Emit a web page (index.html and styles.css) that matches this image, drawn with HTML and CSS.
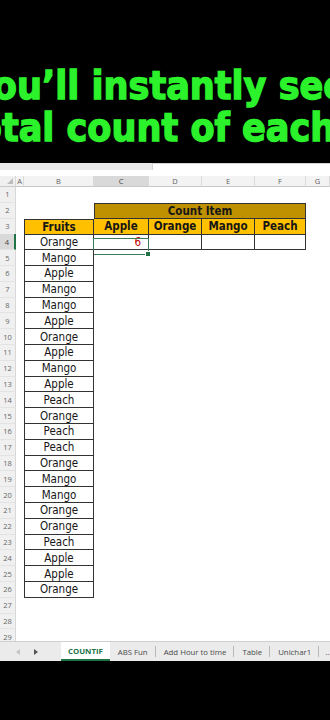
FILE: index.html
```html
<!DOCTYPE html>
<html lang="en">
<head>
    <meta charset="UTF-8">
    <meta name="viewport" content="width=device-width, initial-scale=1.0">
    <title>COUNTIF</title>
    <link rel="stylesheet" href="styles.css">
</head>
<body>
    <div class="caption">
        <div class="caption-line first">You’ll instantly see the</div>
        <div class="caption-line second">total count of each fruit</div>
    </div>

    <div class="excel">
        <div class="formula-strip">
            <div class="name-area"></div>
            <div class="formula-box"></div>
        </div>
        <div class="strip-gap"></div>

        <div class="sheet">
            <div class="row head">
                <div class="corner"><span class="corner-mark"></span></div>
                <div class="ch">A</div>
                <div class="ch">B</div>
                <div class="ch sel">C</div>
                <div class="ch">D</div>
                <div class="ch">E</div>
                <div class="ch">F</div>
                <div class="ch">G</div>
            </div>

            <div class="row"><div class="rh">1</div></div>
            <div class="row">
                <div class="rh">2</div>
                <div class="cell title">Count Item</div>
            </div>
            <div class="row">
                <div class="rh">3</div>
                <div class="cell b top head-cell">Fruits</div>
                <div class="cell c head-cell">Apple</div>
                <div class="cell d head-cell">Orange</div>
                <div class="cell e head-cell">Mango</div>
                <div class="cell f head-cell">Peach</div>
            </div>
            <div class="row">
                <div class="rh sel">4</div>
                <div class="cell b">Orange</div>
                <div class="cell c num">6<span class="selection"><span class="handle"></span></span></div>
                <div class="cell d"></div>
                <div class="cell e"></div>
                <div class="cell f"></div>
            </div>
            <div class="row"><div class="rh">5</div><div class="cell b">Mango</div></div>
            <div class="row"><div class="rh">6</div><div class="cell b">Apple</div></div>
            <div class="row"><div class="rh">7</div><div class="cell b">Mango</div></div>
            <div class="row"><div class="rh">8</div><div class="cell b">Mango</div></div>
            <div class="row"><div class="rh">9</div><div class="cell b">Apple</div></div>
            <div class="row"><div class="rh">10</div><div class="cell b">Orange</div></div>
            <div class="row"><div class="rh">11</div><div class="cell b">Apple</div></div>
            <div class="row"><div class="rh">12</div><div class="cell b">Mango</div></div>
            <div class="row"><div class="rh">13</div><div class="cell b">Apple</div></div>
            <div class="row"><div class="rh">14</div><div class="cell b">Peach</div></div>
            <div class="row"><div class="rh">15</div><div class="cell b">Orange</div></div>
            <div class="row"><div class="rh">16</div><div class="cell b">Peach</div></div>
            <div class="row"><div class="rh">17</div><div class="cell b">Peach</div></div>
            <div class="row"><div class="rh">18</div><div class="cell b">Orange</div></div>
            <div class="row"><div class="rh">19</div><div class="cell b">Mango</div></div>
            <div class="row"><div class="rh">20</div><div class="cell b">Mango</div></div>
            <div class="row"><div class="rh">21</div><div class="cell b">Orange</div></div>
            <div class="row"><div class="rh">22</div><div class="cell b">Orange</div></div>
            <div class="row"><div class="rh">23</div><div class="cell b">Peach</div></div>
            <div class="row"><div class="rh">24</div><div class="cell b">Apple</div></div>
            <div class="row"><div class="rh">25</div><div class="cell b">Apple</div></div>
            <div class="row"><div class="rh">26</div><div class="cell b">Orange</div></div>
            <div class="row"><div class="rh">27</div></div>
            <div class="row"><div class="rh">28</div></div>
            <div class="row"><div class="rh">29</div></div>
        </div>

        <div class="tabs">
            <div class="nav">
                <svg class="arrow off" width="5" height="6" viewBox="0 0 5 6"><path d="M4 0 L0 3 L4 6 Z"/></svg>
                <svg class="arrow" width="5" height="6" viewBox="0 0 5 6"><path d="M1 0 L5 3 L1 6 Z"/></svg>
            </div>
            <div class="tab active">COUNTIF</div>
            <div class="tab">ABS Fun</div>
            <div class="tab">Add Hour to time</div>
            <div class="tab">Table</div>
            <div class="tab">Unichar1</div>
            <div class="tab more">...</div>
        </div>
    </div>
</body>
</html>
```

FILE: styles.css
```css
body {
    background-color: black;
    margin: 0;
    padding: 0;
    font-family: "Liberation Sans Narrow", "DejaVu Sans Condensed", "Liberation Sans", sans-serif;
}

/* 上の字幕 */
.caption {
    height: 163px;
    box-sizing: border-box;
    padding-top: 65px;
    overflow: hidden;
    color: #2cf22c;
    font-family: "DejaVu Sans Condensed", "DejaVu Sans", sans-serif;
    font-stretch: condensed;
    font-weight: bold;
    font-size: 39px;
    line-height: 42px;
    white-space: nowrap;
    -webkit-text-stroke: 1.3px #2cf22c;
}

.caption-line.first {
    text-indent: -29px;
}

.caption-line.second {
    text-indent: -39px;
}

/* Excel の画面 */
.excel {
    background-color: white;
}

.formula-strip {
    display: flex;
    height: 7px;
    background-color: #e9e9e9;
}

.name-area {
    width: 152px;
}

.formula-box {
    flex: 1;
    background-color: white;
    border-left: 1px solid #d4d4d4;
    border-top: 1px solid #d4d4d4;
}

.strip-gap {
    height: 6px;
}

.sheet {
    height: 465px;
    overflow: hidden;
}

.row {
    display: grid;
    grid-template-columns: 16px 8px 70px 55px 53px 53px 51px 1fr;
    height: 15.8px;
    font-size: 11.5px;
    color: #161616;
}

.row.head {
    height: 11px;
    font-family: "Open Sans", "Liberation Sans", sans-serif;
    font-size: 7.5px;
    color: #606060;
}

.corner {
    position: relative;
    background-color: #f0f0f0;
    border-right: 1px solid #d8d8d8;
    border-bottom: 1px solid #c8c8c8;
}

.corner-mark {
    position: absolute;
    right: 2px;
    bottom: 2px;
    width: 0;
    height: 0;
    border-left: 6px solid transparent;
    border-bottom: 6px solid #bdbdbd;
}

.ch {
    display: flex;
    align-items: center;
    justify-content: center;
    background-color: #f3f3f3;
    border-right: 1px solid #dadada;
    border-bottom: 1px solid #c8c8c8;
}

.ch.sel {
    background-color: #d9d9d9;
    color: #444;
}

.rh {
    grid-column: 1;
    display: flex;
    align-items: center;
    justify-content: center;
    box-sizing: border-box;
    background-color: #f0f0f0;
    border-right: 1px solid #d8d8d8;
    border-bottom: 1px solid #e3e3e3;
    font-family: "Open Sans", "Liberation Sans", sans-serif;
    font-size: 7.5px;
    color: #666;
}

.rh.sel {
    background-color: #d9d9d9;
    border-right: 2px solid #217346;
    color: #444;
}

.cell {
    position: relative;
    display: flex;
    align-items: center;
    justify-content: center;
    box-sizing: border-box;
    border-right: 1px solid #333;
    border-bottom: 1px solid #333;
    white-space: nowrap;
}

.cell.b {
    grid-column: 3;
    border-left: 1px solid #333;
}

.cell.c { grid-column: 4; }
.cell.d { grid-column: 5; }
.cell.e { grid-column: 6; }
.cell.f { grid-column: 7; }

.cell.top {
    border-top: 1px solid #333;
}

.cell.title {
    grid-column: 4 / 8;
    background-color: #bf9000;
    border-top: 1px solid #333;
    border-left: 1px solid #333;
    font-weight: bold;
}

.head-cell {
    background-color: #ffc000;
    font-weight: bold;
}

.cell.num {
    justify-content: flex-end;
    padding-right: 7px;
    color: #c00000;
}

/* 選択中のセル */
.selection {
    position: absolute;
    top: 4px;
    left: -1px;
    right: -1px;
    height: 17px;
    box-sizing: border-box;
    border: 1.5px solid #3d7a57;
}

.handle {
    position: absolute;
    right: -3px;
    bottom: -3px;
    width: 4px;
    height: 4px;
    background-color: #217346;
    border: 1px solid white;
}

/* シートタブ */
.tabs {
    display: flex;
    align-items: stretch;
    height: 20px;
    box-sizing: border-box;
    background-color: #ebebeb;
    border-top: 1px solid #d0d0d0;
    font-family: "Open Sans", "Liberation Sans", sans-serif;
    font-size: 7.8px;
    color: #4a4a4a;
    white-space: nowrap;
    overflow: hidden;
}

.nav {
    flex-shrink: 0;
    width: 61px;
    display: flex;
    align-items: center;
    gap: 12px;
    padding-left: 16px;
    box-sizing: border-box;
}

.arrow {
    fill: #555;
}

.arrow.off {
    fill: #c4c4c4;
}

.tab {
    flex-shrink: 0;
    display: flex;
    align-items: center;
    padding: 0 8px;
    position: relative;
}

.tab::after {
    content: "";
    position: absolute;
    right: 0;
    top: 4px;
    bottom: 4px;
    border-right: 1px solid #b8b8b8;
}

.tab.active {
    background-color: white;
    color: #217346;
    font-weight: bold;
    border-bottom: 2px solid #217346;
    padding: 0 7px 0 7px;
}

.tab.active::after {
    display: none;
}

.tab.more {
    padding-left: 6px;
}
```
